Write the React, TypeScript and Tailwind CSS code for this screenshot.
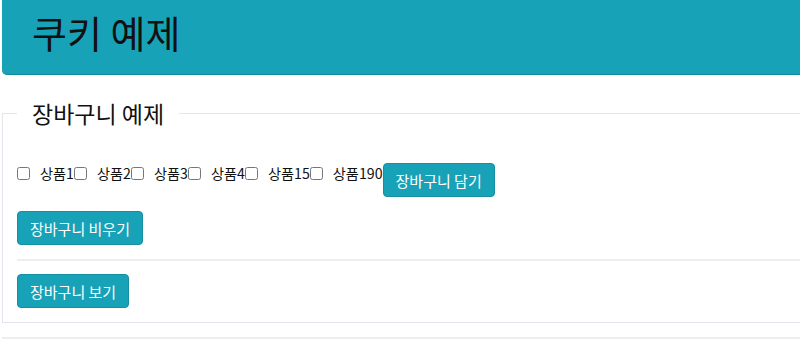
import { useState } from 'react';

const PRODUCTS = ['상품1', '상품2', '상품3', '상품4', '상품15', '상품190'];

const btn =
  'h-[34px] px-3 rounded-[4px] border border-[#148ea1] bg-[#17a2b8] text-white text-[15px] leading-none whitespace-nowrap';

export default function App() {
  const [checked, setChecked] = useState<Record<string, boolean>>({});

  return (
    <div className="w-full overflow-hidden bg-white text-[#212529]" style={{ fontFamily: '"Noto Sans CJK KR", "Noto Sans", sans-serif' }}>
      <div className="ml-[2px] w-[840px]">
        {/* title bar */}
        <div className="h-[75px] pl-[30px] pt-[7px] bg-[#17a2b8] border-b border-[#11899c] rounded-bl-[5px]">
          <h1 className="text-[38px] leading-[50px] text-[#111]">쿠키 예제</h1>
        </div>

        <fieldset className="mt-[25px] px-[14px] pb-[14px] border border-[#e3e6ea] border-r-0">
          <legend className="px-[15px] text-[23px] leading-[26px] text-[#111]">장바구니 예제</legend>

          <div className="mt-[37px] flex items-start">
            {PRODUCTS.map((p) => (
              <label key={p} className="mt-0 flex items-center text-[14.2px] leading-[20px] text-[#111]">
                <input
                  type="checkbox"
                  checked={!!checked[p]}
                  onChange={() => setChecked({ ...checked, [p]: !checked[p] })}
                  className="w-[13px] h-[13px] m-0 mr-[10px]"
                />
                {p}
              </label>
            ))}
            <button type="button" className={btn}>장바구니 담기</button>
          </div>

          <div className="mt-[14px]">
            <button type="button" className={btn}>장바구니 비우기</button>
          </div>

          <hr className="mt-[14px] border-0 border-t-2 border-[#eeeeee]" />

          <div className="mt-[13px]">
            <button type="button" className={btn}>장바구니 보기</button>
          </div>
        </fieldset>

        <hr className="mt-[14px] border-0 border-t-2 border-[#eeeeee]" />
      </div>
    </div>
  );
}
